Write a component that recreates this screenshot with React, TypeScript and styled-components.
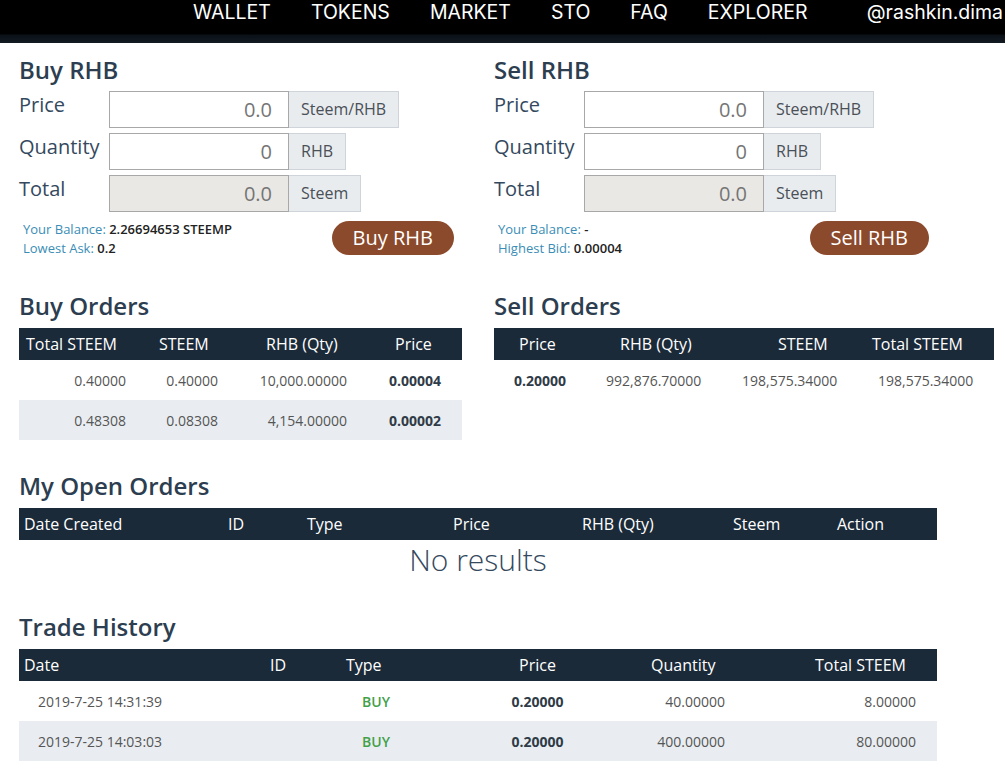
import React from "react";
import styled, { createGlobalStyle } from "styled-components";

const GlobalStyle = createGlobalStyle`
  html, body {
    margin: 0;
    padding: 0;
    background: #fff;
  }
  body {
    font-family: "Open Sans", "Liberation Sans", sans-serif;
    color: #34495e;
  }
  * {
    box-sizing: border-box;
  }
`;

const NavBar = styled.nav`
  height: 43px;
  background: linear-gradient(to bottom, #000 0, #000 34px, #0b1016 35px, #121a22 43px);
  display: flex;
  align-items: flex-start;
  padding: 0 2px 0 193px;
  font-family: Inter, "Liberation Sans", sans-serif;
  font-size: 19.5px;
  line-height: 24px;
  color: #fff;
`;

const NavLink = styled.a`
  color: #fff;
  text-decoration: none;
  margin-right: 40px;
  white-space: nowrap;
`;

const UserLink = styled(NavLink)`
  margin-left: auto;
  margin-right: 0;
`;

const Page = styled.main`
  padding: 12px 0 0 19px;
`;

const TwoCols = styled.div<{ $top?: number }>`
  display: grid;
  grid-template-columns: 475px 500px;
  margin-top: ${(p) => p.$top ?? 0}px;
`;

const Section = styled.section<{ $top?: number }>`
  width: 918px;
  margin-top: ${(p) => p.$top ?? 0}px;
`;

const Title = styled.h2`
  margin: 0 0 7px;
  font-size: 24px;
  line-height: 30px;
  font-weight: 600;
  color: #2c3e50;
`;

const PanelTitle = styled(Title)`
  margin-bottom: 6px;
`;

const FieldRow = styled.div<{ $gap: number }>`
  display: flex;
  height: 37px;
  margin-bottom: ${(p) => p.$gap}px;
`;

const FieldLabel = styled.label`
  width: 90px;
  font-size: 20px;
  line-height: 27px;
  color: #34495e;
`;

const Input = styled.input`
  width: 180px;
  height: 37px;
  border: 1px solid #a8a8a8;
  background: #fff;
  text-align: right;
  padding: 0 16px 0 8px;
  font-family: "Open Sans", sans-serif;
  font-size: 20px;
  color: #757575;
  outline: none;
  &:disabled {
    background: #e9e8e4;
  }
`;

const Addon = styled.span`
  height: 37px;
  padding: 0 12px;
  border: 1px solid #ced4da;
  border-left: none;
  background: #e9ecef;
  font-size: 16px;
  line-height: 35px;
  color: #495057;
`;

const PanelFooter = styled.div`
  width: 435px;
  display: flex;
  justify-content: space-between;
  align-items: flex-start;
`;

const Info = styled.div`
  padding-left: 4px;
  font-size: 13px;
  line-height: 19px;
  color: #3a8db5;
  b {
    font-weight: 600;
    color: #222;
  }
`;

const ActionButton = styled.button`
  margin-top: 1px;
  height: 34px;
  padding: 0 21px;
  border: none;
  border-radius: 17px;
  background: #8b4a2c;
  color: #fff;
  font-family: "Open Sans", sans-serif;
  font-size: 20px;
  line-height: 34px;
  cursor: pointer;
`;

type Align = "left" | "center" | "right";

const HeadRow = styled.div<{ $cols: string }>`
  display: grid;
  grid-template-columns: ${(p) => p.$cols};
  height: 32px;
  align-items: center;
  background: #1b2a39;
  color: #fff;
  font-size: 16px;
`;

const BodyRow = styled.div<{ $cols: string }>`
  display: grid;
  grid-template-columns: ${(p) => p.$cols};
  height: 40px;
  align-items: center;
  font-size: 14px;
  color: #555;
  &:nth-child(even) {
    background: #e9edf1;
  }
`;

const Cell = styled.div<{ $align: Align; $pad: number }>`
  white-space: nowrap;
  text-align: ${(p) => p.$align};
  padding-left: ${(p) => (p.$align === "left" ? p.$pad : 0)}px;
  padding-right: ${(p) => (p.$align === "right" ? p.$pad : 0)}px;
`;

const Strong = styled.span`
  font-weight: 700;
  color: #2f3b47;
`;

const Buy = styled.span`
  font-weight: 600;
  color: #43a047;
`;

const Empty = styled.div`
  text-align: center;
  font-size: 30px;
  line-height: 40px;
  font-weight: 300;
  color: #34495e;
`;

type Col = {
  title: string;
  w: number;
  head: [Align, number];
  cell: [Align, number];
};

const DataTable = ({
  width,
  columns,
  rows,
}: {
  width: number;
  columns: Col[];
  rows: React.ReactNode[][];
}) => {
  const cols = columns.map((c) => `${c.w}px`).join(" ");
  return (
    <div style={{ width }}>
      <HeadRow $cols={cols}>
        {columns.map((c) => (
          <Cell key={c.title} $align={c.head[0]} $pad={c.head[1]}>
            {c.title}
          </Cell>
        ))}
      </HeadRow>
      <div>
        {rows.map((r, i) => (
          <BodyRow key={i} $cols={cols}>
            {r.map((v, j) => (
              <Cell key={j} $align={columns[j].cell[0]} $pad={columns[j].cell[1]}>
                {v}
              </Cell>
            ))}
          </BodyRow>
        ))}
      </div>
    </div>
  );
};

const OrderForm = ({
  title,
  balance,
  bidLabel,
  bid,
  action,
}: {
  title: string;
  balance: string;
  bidLabel: string;
  bid: string;
  action: string;
}) => (
  <div>
    <PanelTitle>{title}</PanelTitle>
    <FieldRow $gap={5}>
      <FieldLabel>Price</FieldLabel>
      <Input defaultValue="0.0" />
      <Addon>Steem/RHB</Addon>
    </FieldRow>
    <FieldRow $gap={5}>
      <FieldLabel>Quantity</FieldLabel>
      <Input defaultValue="0" />
      <Addon>RHB</Addon>
    </FieldRow>
    <FieldRow $gap={8}>
      <FieldLabel>Total</FieldLabel>
      <Input defaultValue="0.0" disabled />
      <Addon>Steem</Addon>
    </FieldRow>
    <PanelFooter>
      <Info>
        <div>
          Your Balance: <b>{balance}</b>
        </div>
        <div>
          {bidLabel}: <b>{bid}</b>
        </div>
      </Info>
      <ActionButton>{action}</ActionButton>
    </PanelFooter>
  </div>
);

const buyCols: Col[] = [
  { title: "Total STEEM", w: 133, head: ["left", 7], cell: ["right", 26] },
  { title: "STEEM", w: 83, head: ["left", 7], cell: ["right", 17] },
  { title: "RHB (Qty)", w: 140, head: ["left", 31], cell: ["right", 28] },
  { title: "Price", w: 87, head: ["left", 20], cell: ["right", 21] },
];

const sellCols: Col[] = [
  { title: "Price", w: 96, head: ["left", 25], cell: ["left", 20] },
  { title: "RHB (Qty)", w: 145, head: ["left", 30], cell: ["left", 16] },
  { title: "STEEM", w: 125, head: ["left", 43], cell: ["left", 7] },
  { title: "Total STEEM", w: 134, head: ["left", 12], cell: ["left", 18] },
];

const openCols: Col[] = [
  { title: "Date Created", w: 204, head: ["left", 5], cell: ["left", 5] },
  { title: "ID", w: 79, head: ["left", 5], cell: ["left", 5] },
  { title: "Type", w: 146, head: ["left", 5], cell: ["left", 5] },
  { title: "Price", w: 129, head: ["left", 5], cell: ["left", 5] },
  { title: "RHB (Qty)", w: 151, head: ["left", 5], cell: ["left", 5] },
  { title: "Steem", w: 104, head: ["left", 5], cell: ["left", 5] },
  { title: "Action", w: 105, head: ["left", 5], cell: ["left", 5] },
];

const historyCols: Col[] = [
  { title: "Date", w: 231, head: ["left", 5], cell: ["left", 19] },
  { title: "ID", w: 56, head: ["center", 0], cell: ["center", 0] },
  { title: "Type", w: 124, head: ["left", 40], cell: ["left", 56] },
  { title: "Price", w: 215, head: ["center", 0], cell: ["center", 0] },
  { title: "Quantity", w: 100, head: ["left", 6], cell: ["right", 20] },
  { title: "Total STEEM", w: 192, head: ["left", 70], cell: ["right", 21] },
];

const buyOrders = [
  ["0.40000", "0.40000", "10,000.00000", <Strong>0.00004</Strong>],
  ["0.48308", "0.08308", "4,154.00000", <Strong>0.00002</Strong>],
];

const sellOrders = [
  [<Strong>0.20000</Strong>, "992,876.70000", "198,575.34000", "198,575.34000"],
];

const trades = [
  ["2019-7-25 14:31:39", "", <Buy>BUY</Buy>, <Strong>0.20000</Strong>, "40.00000", "8.00000"],
  ["2019-7-25 14:03:03", "", <Buy>BUY</Buy>, <Strong>0.20000</Strong>, "400.00000", "80.00000"],
];

export default function App() {
  return (
    <>
      <GlobalStyle />
      <NavBar>
        <NavLink>WALLET</NavLink>
        <NavLink>TOKENS</NavLink>
        <NavLink>MARKET</NavLink>
        <NavLink>STO</NavLink>
        <NavLink>FAQ</NavLink>
        <NavLink>EXPLORER</NavLink>
        <UserLink>@rashkin.dima</UserLink>
      </NavBar>
      <Page>
        <TwoCols>
          <OrderForm
            title="Buy RHB"
            balance="2.26694653 STEEMP"
            bidLabel="Lowest Ask"
            bid="0.2"
            action="Buy RHB"
          />
          <OrderForm
            title="Sell RHB"
            balance="-"
            bidLabel="Highest Bid"
            bid="0.00004"
            action="Sell RHB"
          />
        </TwoCols>
        <TwoCols $top={33}>
          <div>
            <Title>Buy Orders</Title>
            <DataTable width={443} columns={buyCols} rows={buyOrders} />
          </div>
          <div>
            <Title>Sell Orders</Title>
            <DataTable width={500} columns={sellCols} rows={sellOrders} />
          </div>
        </TwoCols>
        <Section $top={31}>
          <Title>My Open Orders</Title>
          <DataTable width={918} columns={openCols} rows={[]} />
          <Empty>No results</Empty>
        </Section>
        <Section $top={32}>
          <Title>Trade History</Title>
          <DataTable width={918} columns={historyCols} rows={trades} />
        </Section>
      </Page>
    </>
  );
}
